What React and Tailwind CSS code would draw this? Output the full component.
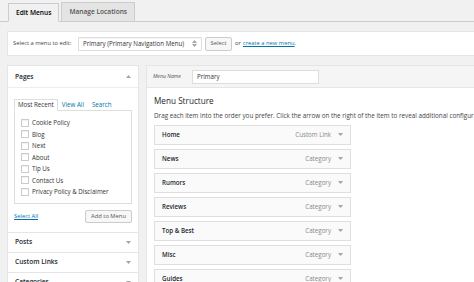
import React from "react";

const pages = ["Cookie Policy", "Blog", "Next", "About", "Tip Us", "Contact Us", "Privacy Policy & Disclaimer"];

const menuItems = [
  { title: "Home", type: "Custom Link" },
  { title: "News", type: "Category" },
  { title: "Rumors", type: "Category" },
  { title: "Reviews", type: "Category" },
  { title: "Top & Best", type: "Category" },
  { title: "Misc", type: "Category" },
  { title: "Guides", type: "Category" },
];

// tiny WP-style triangles
const Down = () => (
  <svg width="5" height="3" viewBox="0 0 5 3" className="shrink-0">
    <path d="M0 0h5L2.5 3z" fill="#a0a5aa" />
  </svg>
);
const Up = () => (
  <svg width="5" height="3" viewBox="0 0 5 3" className="shrink-0">
    <path d="M0 3h5L2.5 0z" fill="#a0a5aa" />
  </svg>
);

export default function App() {
  return (
    <div className="w-[474px] h-[282px] overflow-hidden bg-[#f1f1f1] font-['Open_Sans',sans-serif] text-[#444]">
      {/* Tabs */}
      <div className="flex items-end gap-[2px] pl-[8px] pt-[3px] h-[22px] border-b border-[#ccc]">
        <div className="h-[19px] -mb-px px-[7px] flex items-center bg-[#f1f1f1] border border-[#ccc] border-b-[#f1f1f1] text-[6.6px] font-semibold text-[#000]">
          Edit Menus
        </div>
        <div className="h-[19px] px-[7px] flex items-center bg-[#e4e4e4] border border-[#ccc] border-b-0 text-[6.6px] font-semibold text-[#555]">
          Manage Locations
        </div>
      </div>

      {/* Select bar */}
      <div className="mt-[9px] ml-[7px] h-[25px] bg-white border border-r-0 border-[#e5e5e5] flex items-center pl-[5px] text-[5.8px] text-[#444]">
        <span className="w-[65px] shrink-0 whitespace-nowrap">Select a menu to edit:</span>
        <div className="w-[124px] h-[14px] border border-[#ddd] rounded-[1px] flex items-center justify-between px-[4px] text-[6.2px] text-[#333] shadow-[inset_0_1px_1px_rgba(0,0,0,0.05)]">
          <span>Primary (Primary Navigation Menu)</span>
          <span className="flex flex-col gap-[1px]">
            <Up />
            <Down />
          </span>
        </div>
        <div className="ml-[3px] h-[14px] w-[27px] border border-[#ccc] bg-[#f7f7f7] rounded-[2px] flex items-center justify-center text-[5.8px] text-[#555]">
          Select
        </div>
        <span className="ml-[3px]">or</span>
        <span className="ml-[2px] text-[#0073aa] underline">create a new menu</span>
        <span>.</span>
      </div>

      {/* Main */}
      <div className="mt-[9px] ml-[7px] flex gap-[7px]">
        {/* Left column */}
        <div className="w-[132px] shrink-0 bg-white border border-[#e5e5e5]">
          <div className="h-[22px] flex items-center justify-between px-[7px] border-b border-[#eee] text-[6.6px] font-semibold text-[#23282d]">
            <span>Pages</span>
            <Up />
          </div>
          <div className="px-[6px] pt-[11px] pb-[9px] border-b border-[#e5e5e5]">
            <div className="flex items-end text-[6.2px] h-[11px]">
              <div className="relative z-10 -mb-px h-[12px] px-[3px] flex items-center bg-white border border-[#ddd] border-b-white text-[#333]">
                Most Recent
              </div>
              <span className="ml-[4px] h-[11px] flex items-center text-[#0073aa]">View All</span>
              <span className="ml-[8px] h-[11px] flex items-center text-[#0073aa]">Search</span>
            </div>
            <div className="border border-[#ddd] pt-[6px] pb-[5px] px-[6px]">
              {pages.map((p) => (
                <div key={p} className="h-[11.5px] flex items-center gap-[3px] text-[6.2px] text-[#333]">
                  <span className="w-[8px] h-[8px] border border-[#c8ccd0] bg-white shrink-0 shadow-[inset_0_1px_1px_rgba(0,0,0,0.06)]" />
                  <span className="whitespace-nowrap">{p}</span>
                </div>
              ))}
            </div>
            <div className="mt-[6px] flex items-center justify-between">
              <span className="text-[5.8px] text-[#0073aa] underline">Select All</span>
              <div className="h-[13px] w-[47px] border border-[#ccc] bg-[#f7f7f7] rounded-[2px] flex items-center justify-center text-[5.8px] text-[#555]">
                Add to Menu
              </div>
            </div>
          </div>
          {["Posts", "Custom Links", "Categories"].map((s) => (
            <div key={s} className="h-[20px] flex items-center justify-between px-[7px] border-b border-[#e5e5e5] text-[6.6px] font-semibold text-[#23282d]">
              <span>{s}</span>
              <Down />
            </div>
          ))}
        </div>

        {/* Right column */}
        <div className="flex-1 bg-white border border-r-0 border-[#e5e5e5]">
          <div className="h-[22px] flex items-center px-[6px] bg-[#f5f5f5] border-b border-[#e5e5e5]">
            <span className="w-[39px] shrink-0 text-[5.2px] italic text-[#555]">Menu Name</span>
            <div className="w-[127px] h-[14px] bg-white border border-[#ddd] flex items-center px-[4px] text-[6.2px] text-[#333]">
              Primary
            </div>
          </div>
          <div className="pl-[7px] pt-[6px]">
            <div className="text-[8.2px] font-medium text-[#23282d] leading-[14px] h-[14px]">Menu Structure</div>
            <div className="mt-[4px] text-[6.3px] text-[#444] whitespace-nowrap leading-[8px]">
              Drag each item into the order you prefer. Click the arrow on the right of the item to reveal additional configuration options.
            </div>
            <div className="mt-[5px] flex flex-col gap-[4px] w-[197px]">
              {menuItems.map((m) => (
                <div key={m.title} className="h-[20px] shrink-0 flex items-center justify-between pl-[7px] pr-[7px] bg-[#fafafa] border border-[#dfdfdf] text-[6.2px]">
                  <span className="font-semibold text-[#23282d]">{m.title}</span>
                  <span className="flex items-center gap-[7px] text-[#888]">
                    {m.type}
                    <Down />
                  </span>
                </div>
              ))}
            </div>
          </div>
        </div>
      </div>
    </div>
  );
}
